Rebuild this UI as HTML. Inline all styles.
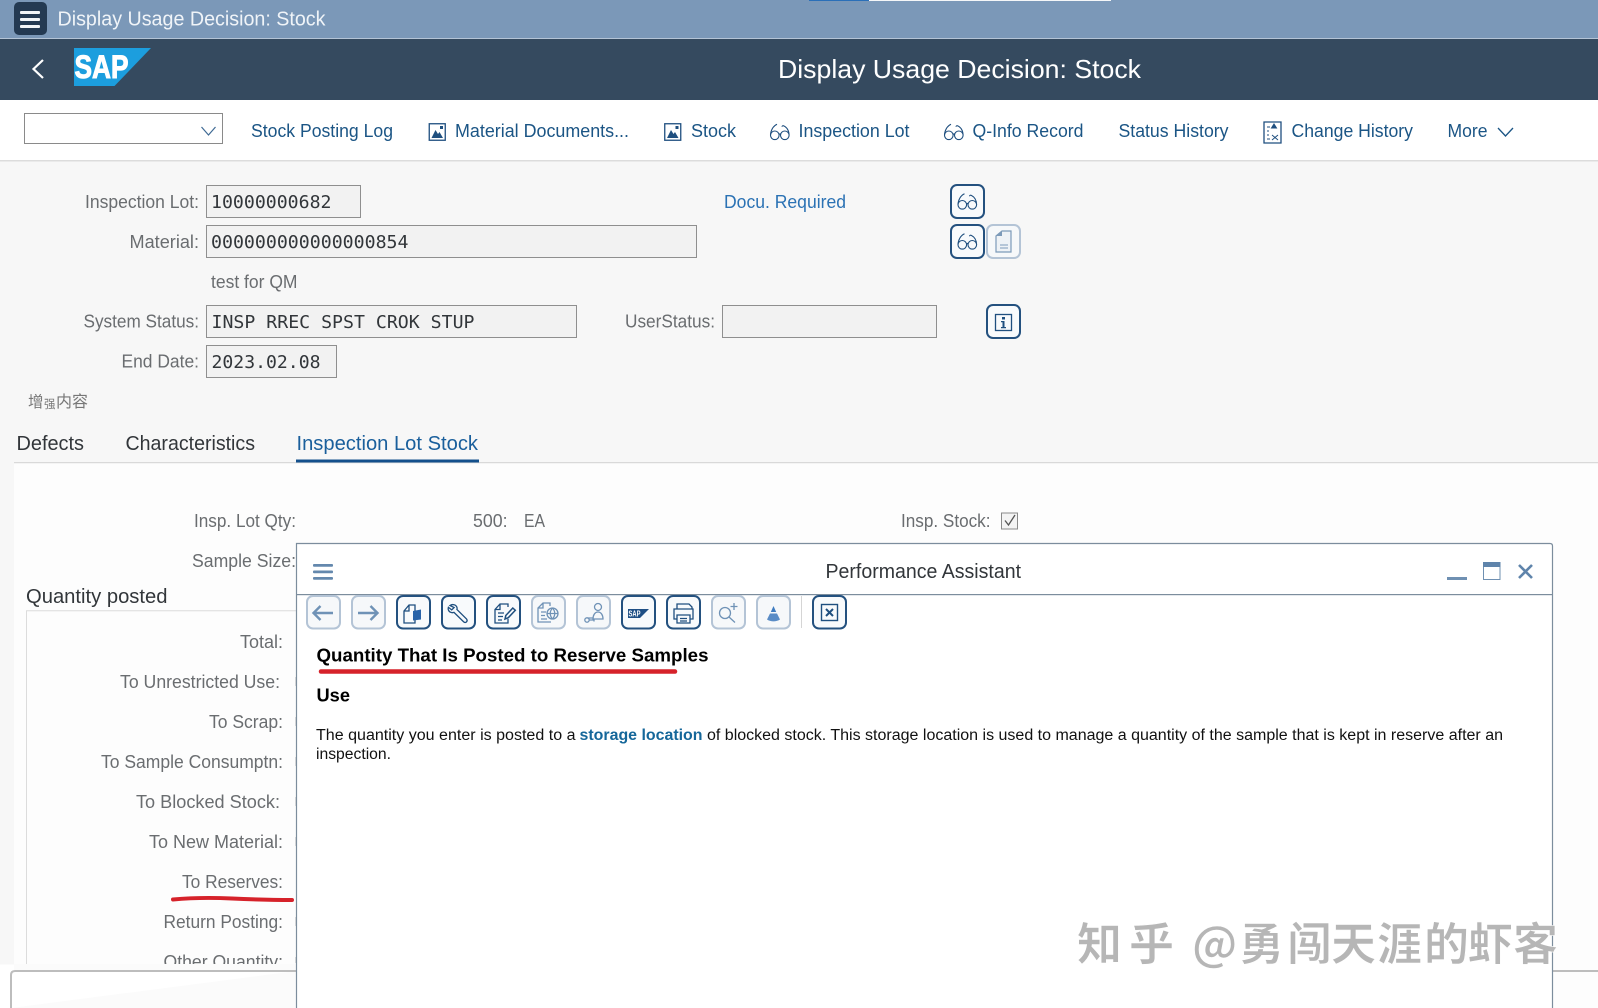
<!DOCTYPE html>
<html><head><meta charset="utf-8"><title>Display Usage Decision: Stock</title>
<style>
html,body{margin:0;padding:0;background:#f7f7f7;width:1598px;height:1008px;overflow:hidden}
svg{display:block}
text{font-family:"Liberation Sans","Noto Sans CJK SC",sans-serif}
.tb{font-size:18px;fill:#1b5585}
.lb{font-size:18px;fill:#6a6d70}
.mono{font-family:"DejaVu Sans Mono",monospace;font-size:17.500px;fill:#32363a}
.fld{fill:#f2f2f2;stroke:#8f8f8f;stroke-width:1}
.on{fill:#f8fafc;stroke:#24517f;stroke-width:2}
.off{fill:#f6f8fa;stroke:#b4c4d6;stroke-width:2}
.i{fill:none;stroke:#1f4f7f;stroke-width:1.300}
.g{fill:none;stroke:#1f4f7f;stroke-width:1.100}
.d{fill:none;stroke:#6f92b6;stroke-width:1.300}
</style></head><body>
<svg width="1598" height="1008" viewBox="0 0 1598 1008" xmlns="http://www.w3.org/2000/svg">
<defs>
<g id="gl"><circle cx="4.800" cy="12.300" r="4.300"/><circle cx="14.800" cy="12.300" r="4.300"/><path d="M9 11.500c.7-.7 1.300-.7 2 0M.5 12C.7 7.500 3 3 7 1.200M19.100 12C18.900 8 17 4.500 14 3c-1.200-.6-2-.1-2 .8"/></g>
<g id="pic"><rect x=".75" y=".75" width="16" height="16.500" fill="none" stroke="#1f4f7f" stroke-width="1.300"/><path d="M3 15l4-8 2.500 4 1.500-2 3.500 6z" fill="#1f4f7f"/><rect x="11.500" y="3" width="3" height="3" fill="#1f4f7f"/></g>
</defs>

<!-- page backgrounds -->
<rect width="1598" height="1008" fill="#f7f7f7"/>
<rect x="0" y="0" width="1598" height="38" fill="#7b98b8"/>
<rect x="0" y="38" width="1598" height="1" fill="#b4c4d6"/>
<rect x="809" y="0" width="60" height="1" fill="#2a6fb8"/>
<rect x="869" y="0" width="242" height="1" fill="#f4f6f8"/>
<rect x="0" y="39" width="1598" height="61" fill="#354a5f"/>
<rect x="0" y="100" width="1598" height="60" fill="#fff"/>
<rect x="0" y="160" width="1598" height="1.500" fill="#dcdcdc"/>

<!-- shell -->
<rect x="14" y="2" width="33" height="33" rx="5" fill="#243a52"/>
<rect x="20" y="11" width="20" height="3" rx="1" fill="#f2f5f8"/><rect x="20" y="18" width="20" height="3" rx="1" fill="#f2f5f8"/><rect x="20" y="25" width="20" height="3" rx="1" fill="#f2f5f8"/>
<text x="57.500" y="25.500" font-size="20" fill="#f0f4f8" textLength="268" lengthAdjust="spacingAndGlyphs">Display Usage Decision: Stock</text>
<path d="M43 60l-9.500 9 9.500 9" fill="none" stroke="#fff" stroke-width="2.200"/>
<polygon points="74,48 151,48 114.500,86 74,86" fill="#1c9ede"/>
<text x="74.500" y="78" font-size="32" font-weight="bold" fill="#fff" stroke="#fff" stroke-width="1" textLength="54" lengthAdjust="spacingAndGlyphs">SAP</text>
<text x="778" y="78" font-size="26" fill="#fff" textLength="363" lengthAdjust="spacingAndGlyphs">Display Usage Decision: Stock</text>

<!-- toolbar -->
<rect x="24.500" y="113.500" width="198" height="30" fill="#fff" stroke="#8a8a8a"/>
<path d="M201.500 127l7 8 7-8" fill="none" stroke="#3f6a94" stroke-width="1.200"/>
<text class="tb" x="251" y="137" textLength="142" lengthAdjust="spacingAndGlyphs">Stock Posting Log</text>
<use href="#pic" x="428.500" y="123"/>
<text class="tb" x="455" y="137" textLength="174" lengthAdjust="spacingAndGlyphs">Material Documents...</text>
<use href="#pic" x="664" y="123"/>
<text class="tb" x="691" y="137" textLength="45" lengthAdjust="spacingAndGlyphs">Stock</text>
<use href="#gl" x="770" y="123" class="g"/>
<text class="tb" x="798.500" y="137" textLength="111" lengthAdjust="spacingAndGlyphs">Inspection Lot</text>
<use href="#gl" x="944" y="123" class="g"/>
<text class="tb" x="972.500" y="137" textLength="111" lengthAdjust="spacingAndGlyphs">Q-Info Record</text>
<text class="tb" x="1118.500" y="137" textLength="110" lengthAdjust="spacingAndGlyphs">Status History</text>
<g fill="none" stroke="#1f4f7f" stroke-width="1.300"><path d="M1264 122h17v21h-17z"/><path d="M1267 127h3M1267 131h2M1267 135h2M1267 139h3" stroke-width="1.100"/></g><path d="M1274 124l2.500 4h-5zM1272 135l6 5M1278 135l-6 5" fill="#1f4f7f" stroke="#1f4f7f" stroke-width="1"/>
<text class="tb" x="1291.500" y="137" textLength="121.500" lengthAdjust="spacingAndGlyphs">Change History</text>
<text class="tb" x="1447.500" y="137" textLength="40" lengthAdjust="spacingAndGlyphs">More</text>
<path d="M1498 128l7.500 8 7.500-8" fill="none" stroke="#1b5585" stroke-width="1.300"/>

<!-- header form -->
<text class="lb" x="85" y="208" textLength="114" lengthAdjust="spacingAndGlyphs">Inspection Lot:</text>
<rect class="fld" x="206.500" y="185.500" width="154" height="32"/>
<text class="mono" x="211" y="208" textLength="120.500" lengthAdjust="spacingAndGlyphs">10000000682</text>
<text x="724" y="208" font-size="18" fill="#2b72b4" textLength="122" lengthAdjust="spacingAndGlyphs">Docu. Required</text>
<rect class="on" x="951" y="185" width="33" height="33" rx="6"/><use href="#gl" x="957.500" y="192.500" class="g"/>

<text class="lb" x="129.500" y="248" textLength="69.500" lengthAdjust="spacingAndGlyphs">Material:</text>
<rect class="fld" x="206.500" y="225.500" width="490" height="32"/>
<text class="mono" x="211" y="248" textLength="197.500" lengthAdjust="spacingAndGlyphs">000000000000000854</text>
<rect class="on" x="951" y="225" width="33" height="33" rx="6"/><use href="#gl" x="957.500" y="232.500" class="g"/>
<rect class="off" x="987" y="225" width="33" height="33" rx="6"/>
<path d="M996 236l6-5h9v21h-15z" fill="#eef2f6" stroke="#7c9ab9" stroke-width="1.200"/><path d="M996 236l6-5v5z" fill="#7c9ab9"/><path d="M1000 245h8M1000 248h8" stroke="#7c9ab9"/>

<text class="lb" x="211" y="288" textLength="86.500" lengthAdjust="spacingAndGlyphs">test for QM</text>

<text class="lb" x="83.500" y="327.500" textLength="115.500" lengthAdjust="spacingAndGlyphs">System Status:</text>
<rect class="fld" x="206.500" y="305.500" width="370" height="32"/>
<text class="mono" x="211.500" y="328" textLength="263" lengthAdjust="spacingAndGlyphs">INSP RREC SPST CROK STUP</text>
<text class="lb" x="625" y="327.500" textLength="90" lengthAdjust="spacingAndGlyphs">UserStatus:</text>
<rect class="fld" x="722.500" y="305.500" width="214" height="32"/>
<rect class="on" x="987" y="305" width="33" height="33" rx="6"/>
<rect x="995.500" y="314.500" width="16" height="16" fill="none" stroke="#1f4f7f" stroke-width="1.300"/><rect x="1002" y="317" width="3" height="2.500" fill="#1f4f7f"/><path d="M1001 321h3.500v6h1.500v1.200h-5V327h1.500v-4.800H1001z" fill="#1f4f7f"/>

<text class="lb" x="121.500" y="367.500" textLength="77.500" lengthAdjust="spacingAndGlyphs">End Date:</text>
<rect class="fld" x="206.500" y="345.500" width="130" height="32"/>
<text class="mono" x="211.500" y="368" textLength="109" lengthAdjust="spacingAndGlyphs">2023.02.08</text>

<g fill="#777"><text x="28" y="407" font-size="15.500">增</text><text x="44" y="408" font-size="11.500">强</text><text x="56" y="407" font-size="16">内</text><text x="72" y="407" font-size="16">容</text></g>

<!-- tabs -->
<text x="16.500" y="450" font-size="20" fill="#32363a" textLength="67.500" lengthAdjust="spacingAndGlyphs">Defects</text>
<text x="125.500" y="450" font-size="20" fill="#32363a" textLength="129.500" lengthAdjust="spacingAndGlyphs">Characteristics</text>
<text x="296.500" y="450" font-size="20" fill="#1a5f9c" textLength="181.500" lengthAdjust="spacingAndGlyphs">Inspection Lot Stock</text>
<rect x="14" y="463.500" width="1584" height="544.500" fill="#fdfdfd"/>
<rect x="14" y="462" width="1584" height="1.200" fill="#d9d9d9"/>
<rect x="296" y="459.500" width="183" height="3" fill="#14508c"/>

<!-- tab content -->
<text class="lb" x="194" y="527" textLength="102" lengthAdjust="spacingAndGlyphs">Insp. Lot Qty:</text>
<text class="lb" x="473" y="527" textLength="34.500" lengthAdjust="spacingAndGlyphs">500:</text>
<text class="lb" x="524" y="527" textLength="21" lengthAdjust="spacingAndGlyphs">EA</text>
<text class="lb" x="901" y="527" textLength="89.500" lengthAdjust="spacingAndGlyphs">Insp. Stock:</text>
<rect x="1001.500" y="513" width="16" height="16" fill="#f4f4f4" stroke="#8a8a8a"/>
<path d="M1005 520.500l3.500 4.500 6.500-10" fill="none" stroke="#555" stroke-width="1.300"/>
<text class="lb" x="192" y="567" textLength="104" lengthAdjust="spacingAndGlyphs">Sample Size:</text>
<text x="26" y="603" font-size="20" fill="#32363a" textLength="141.500" lengthAdjust="spacingAndGlyphs">Quantity posted</text>
<path d="M26.500 965V610.700H296" fill="none" stroke="#dcdcdc"/>
<g fill="#dcdcdc"><rect x="295" y="677" width="1.500" height="9"/><rect x="295" y="717" width="1.500" height="9"/><rect x="295" y="757" width="1.500" height="9"/><rect x="295" y="797" width="1.500" height="9"/><rect x="295" y="837" width="1.500" height="9"/><rect x="295" y="917" width="1.500" height="9"/><rect x="295" y="957" width="1.500" height="6"/></g>
<text class="lb" x="240" y="648" textLength="43" lengthAdjust="spacingAndGlyphs">Total:</text>
<text class="lb" x="120" y="688" textLength="160" lengthAdjust="spacingAndGlyphs">To Unrestricted Use:</text>
<text class="lb" x="209" y="728" textLength="74" lengthAdjust="spacingAndGlyphs">To Scrap:</text>
<text class="lb" x="101" y="768" textLength="182" lengthAdjust="spacingAndGlyphs">To Sample Consumptn:</text>
<text class="lb" x="136" y="808" textLength="144" lengthAdjust="spacingAndGlyphs">To Blocked Stock:</text>
<text class="lb" x="149" y="848" textLength="134" lengthAdjust="spacingAndGlyphs">To New Material:</text>
<text class="lb" x="182" y="888" textLength="101" lengthAdjust="spacingAndGlyphs">To Reserves:</text>
<path d="M173 899.500Q200 897 232 898.500T292 900" fill="none" stroke="#d6222a" stroke-width="4" stroke-linecap="round"/>
<text class="lb" x="163.500" y="928" textLength="119.500" lengthAdjust="spacingAndGlyphs">Return Posting:</text>
<text class="lb" x="163.500" y="968" textLength="119.500" lengthAdjust="spacingAndGlyphs">Other Quantity:</text>
<rect x="0" y="964" width="296" height="44" fill="#fbfbfb"/>
<rect x="1553" y="964" width="45" height="44" fill="#fdfdfd"/>
<rect x="0" y="965" width="14" height="43" fill="#fff"/>
<path d="M11 1008V975q0-4 4-4H296" fill="#fff" stroke="#bdbdbd" stroke-width="2"/>
<path d="M1553 971H1598" stroke="#bdbdbd" stroke-width="2"/>

<!-- dialog -->
<path d="M296.500 1008V543.500H1550q2.500 0 2.500 2.500V1008" fill="#fff" stroke="#7c8d9d" stroke-width="1.200"/>
<rect x="297" y="594" width="1255.500" height="1.200" fill="#7c8d9d"/>
<g fill="#6488ad"><rect x="313" y="564" width="20" height="2.800" rx="1"/><rect x="313" y="570.500" width="20" height="2.800" rx="1"/><rect x="313" y="577" width="20" height="2.800" rx="1"/></g>
<text x="825.500" y="578" font-size="20" fill="#32363a" textLength="195.500" lengthAdjust="spacingAndGlyphs">Performance Assistant</text>
<rect x="1447" y="577" width="20" height="3" fill="#6f90b2"/>
<rect x="1483.500" y="562.500" width="16.500" height="17" fill="#fff" stroke="#6f90b2"/><rect x="1483" y="562" width="17.500" height="5" fill="#5f84ab"/>
<path d="M1519 565l13 13M1532 565l-13 13" stroke="#5f84ab" stroke-width="2.600"/>

<!-- dialog toolbar -->
<rect class="off" x="307" y="596" width="33" height="32.500" rx="6"/>
<path d="M333 613h-19M320.500 606l-7 7 7 7" fill="none" stroke="#6f92b6" stroke-width="2.400"/>
<rect class="off" x="352" y="596" width="33" height="32.500" rx="6"/>
<path d="M358 613h19M370.500 606l7 7-7 7" fill="none" stroke="#6f92b6" stroke-width="2.400"/>

<rect class="on" x="397" y="596" width="33" height="32.500" rx="6"/>
<path class="i" d="M404 611l5-6h6v18h-11zM404 611h5v-6" stroke-width="1.500"/><path d="M413 611l8-1.500v10l-8 1z" fill="#2a63a8"/>

<rect class="on" x="442" y="596" width="33" height="32.500" rx="6"/>
<path class="i" d="M450 605.500c2.200-1.500 6-1.300 7 2 .2.700.1 1.400-.1 2l9.700 9.600c1.600 2-1 4.400-2.900 2.800l-9.700-9.500c-2.500.8-5.200-.2-5.800-3.200-.1-.7 0-1.300.2-1.900l3.300 2.600 2.400-2.400z" stroke-width="1.400"/>

<rect class="on" x="487" y="596" width="33" height="32.500" rx="6"/>
<path class="i" d="M508 607v-3h-8l-5 5.500V623h13v-4M495 609.500h5V604M498 613h6M498 616.500h5M498 620h4" stroke-width="1.400"/><path d="M505 619l.8-3.500 7-7.500 2.500 2.300-7 7.400z" fill="none" stroke="#1f4f7f" stroke-width="1.500"/>

<rect class="off" x="532" y="596" width="33" height="32.500" rx="6"/>
<path class="d" d="M550 606v-3h-7l-5 5v14h13M538 608h5v-5M541 612h5M541 615.500h4M541 619h6"/><circle class="d" cx="552.500" cy="613.500" r="5.500"/><path class="d" d="M547 613.500h11M552.500 608c-3 3.500-3 7.500 0 11M552.500 608c3 3.500 3 7.500 0 11" stroke-width="1"/>

<rect class="off" x="577" y="596" width="33" height="32.500" rx="6"/>
<circle class="d" cx="598" cy="607" r="3.500"/><path class="d" d="M593 619c0-4 2-7 5-7s5 3 5 7zM587.500 618h6"/><circle class="d" cx="587" cy="620" r="2.200"/><path class="d" d="M589 620h5v1.500"/>

<rect class="on" x="622" y="596" width="33" height="32.500" rx="6"/>
<polygon points="628,609 649,609 640,618 628,618" fill="#1f4f85"/><text x="628.500" y="616.500" font-size="8" font-weight="bold" fill="#fff" textLength="12" lengthAdjust="spacingAndGlyphs">SAP</text>

<rect class="on" x="667" y="596" width="33" height="32.500" rx="6"/>
<path class="i" d="M677 609v-5h12l3 3v2M677 619h-3v-10h19v10h-3" stroke-width="1.500"/><path class="i" d="M677 615h13v8h-13zM680 618.500h7M680 621h7" stroke-width="1.300"/>

<rect class="off" x="712" y="596" width="33" height="32.500" rx="6"/>
<circle class="d" cx="725" cy="613" r="5.500"/><path class="d" d="M729 617l6 5.500M734 603v7M730.500 606.500h7"/>

<rect class="off" x="757" y="596" width="33" height="32.500" rx="6"/>
<path d="M773.500 606l2.700 6h-5.400z" fill="#3f7cc0"/><path d="M770 613.500h7l3 6c-4 2.500-9 2.500-13 0z" fill="#5a8cc6"/>

<rect x="801" y="596" width="1" height="32" fill="#d5d5d5"/>
<rect class="on" x="813" y="596" width="33" height="32.500" rx="6"/>
<rect x="821.500" y="604.500" width="16" height="16" fill="none" stroke="#1f4f7f" stroke-width="1.400"/><path d="M826 609l7 7M833 609l-7 7" stroke="#1f4f7f" stroke-width="2"/>

<!-- help text -->
<text x="316.500" y="661.500" font-size="18" font-weight="bold" fill="#000" textLength="392" lengthAdjust="spacingAndGlyphs">Quantity That Is Posted to Reserve Samples</text>
<path d="M321 671.500H675" stroke="#d6222a" stroke-width="4.500" stroke-linecap="round"/>
<text x="316.500" y="701.500" font-size="18" font-weight="bold" fill="#000" textLength="33.500" lengthAdjust="spacingAndGlyphs">Use</text>
<text x="316" y="740" font-size="15.500" fill="#111" textLength="259.500" lengthAdjust="spacingAndGlyphs">The quantity you enter is posted to a</text>
<text x="579.500" y="740" font-size="15.500" font-weight="bold" fill="#15679a" textLength="123" lengthAdjust="spacingAndGlyphs">storage location</text>
<text x="707" y="740" font-size="15.500" fill="#111" textLength="796" lengthAdjust="spacingAndGlyphs">of blocked stock. This storage location is used to manage a quantity of the sample that is kept in reserve after an</text>
<text x="316" y="759" font-size="15.500" fill="#111" textLength="75" lengthAdjust="spacingAndGlyphs">inspection.</text>

<!-- watermark -->
<text y="960" font-size="45" font-weight="700" fill="#b6b6b6" stroke="#fff" stroke-width=".6" style="font-family:'Noto Sans CJK SC',sans-serif" x="1077 1129 1192 1239 1287 1331 1377 1424 1468 1513">知乎@勇闯天涯的虾客</text>
</svg>
</body></html>
